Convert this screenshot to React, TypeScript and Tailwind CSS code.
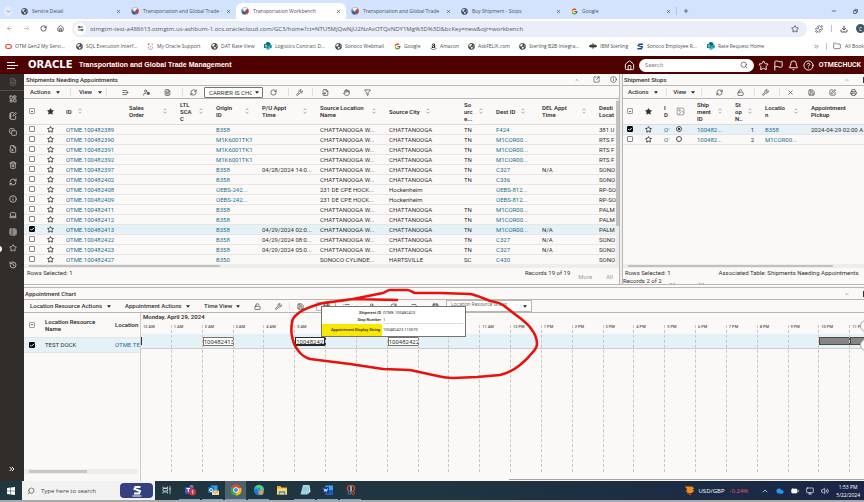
import { useState } from "react";
import type { ReactNode } from "react";
import {
  ArrowLeft,
  ArrowRight,
  Battery,
  BellIcon,
  Calendar,
  ChevronDown,
  ChevronsRight,
  ChevronUp,
  CircleHelp,
  Cloud,
  Copy,
  Download,
  FileInput,
  FileText,
  Filter,
  Flag,
  Folder,
  Hand,
  History,
  House,
  Image,
  Info,
  Laptop,
  LayoutDashboard,
  List,
  ListPlus,
  LockOpen,
  Minus,
  Monitor,
  NotebookPen,
  Plus,
  Printer,
  Puzzle,
  RefreshCw,
  RotateCw,
  Save,
  Search,
  Settings2,
  SquareArrowOutUpRight,
  SquarePen,
  Star,
  TableProperties,
  Trash2,
  UserCog,
  Volume2,
  Wrench,
  X,
} from "lucide-react";
import { FaAmazon, FaGlobeAmericas } from "react-icons/fa";
import { FcGoogle } from "react-icons/fc";

const Globe = () => <FaGlobeAmericas className="size-[7px] shrink-0 text-[#4a4d52]" />;

const OtmLogo = () => (
  <svg viewBox="0 0 16 16" className="size-2 shrink-0">
    <circle cx="8" cy="8" r="7.500" fill="#7d8894" />
    <path d="M2 4c3-4 8-4 11-1L8 8z" fill="#f1f3f5" />
    <path d="M8 7l6-3c2 4 1 8-2 10z" fill="#d8302f" />
    <path d="M2 9l6-2 2 6-4 2C4 14 2 12 2 9z" fill="#2b62ad" />
    <circle cx="7" cy="7" r="2" fill="#fff" />
  </svg>
);

const Sharepoint = () => (
  <svg viewBox="0 0 16 16" className="size-2 shrink-0">
    <circle cx="8" cy="5" r="5" fill="#036c70" />
    <circle cx="12" cy="9" r="4" fill="#1a9ba1" />
    <circle cx="8" cy="12.500" r="3.500" fill="#37c6d0" />
    <rect x="0" y="4" width="8" height="8" rx="1" fill="#03787c" />
    <path d="M6 6H3v2h3v2H2" stroke="#fff" fill="none" />
  </svg>
);

const SonocoLogo = () => (
  <svg viewBox="0 0 16 16" className="size-[7px] shrink-0">
    <path d="M14 3H5L3 6l9 3-2 4H1" stroke="#1d4f91" strokeWidth="3.500" fill="none" />
  </svg>
);

const SupportLogo = () => (
  <svg viewBox="0 0 16 16" className="size-[7px] shrink-0" fill="none" strokeWidth="2">
    <path d="M3 6V2h4" stroke="#c65bb5" />
    <path d="M10 2h3v4" stroke="#e3b23c" />
    <path d="M3 9c0 4 2 5 5 6 3-1 5-2 5-6" stroke="#a58be0" />
    <circle cx="8" cy="8" r="1.500" fill="#8bc34a" />
  </svg>
);

const IbmLogo = () => (
  <svg viewBox="0 0 16 16" className="size-2 shrink-0">
    <path d="M0 8h16M4 5v6M8 3v10M12 5v6" stroke="#222" strokeWidth="2.500" />
  </svg>
);

const OracleRing = () => (
  <svg viewBox="0 0 16 16" className="size-[7px] shrink-0">
    <rect x="1.500" y="3.500" width="13" height="9" rx="4.500" stroke="#e0443a" strokeWidth="2.500" fill="none" />
  </svg>
);

const tabs = [
  { title: "Service Detail", icon: <Globe /> },
  { title: "Transportation and Global Trade", icon: <OtmLogo /> },
  { title: "Transportation Workbench", icon: <OtmLogo />, active: true },
  { title: "Transportation and Global Trade", icon: <OtmLogo /> },
  { title: "Buy Shipment - Stops", icon: <Globe /> },
  { title: "Google", icon: <FcGoogle className="size-[7px] shrink-0" /> },
];

const bookmarks = [
  { title: "OTM Gen2 My Servi...", icon: <OracleRing />, width: "w-[71px]" },
  { title: "SQL Execution Interf...", icon: <Globe />, width: "w-[71px]" },
  { title: "My Oracle Support", icon: <SupportLogo />, width: "w-16" },
  { title: "DAT Rate View", icon: <Globe />, width: "w-[53px]" },
  { title: "Logistics Contract D...", icon: <Sharepoint />, width: "w-[71px]" },
  { title: "Sonoco Webmail", icon: <Globe />, width: "w-[59px]" },
  { title: "Google", icon: <FcGoogle className="size-[7px] shrink-0" />, width: "w-9" },
  { title: "Amazon", icon: <FaAmazon className="size-[7px] shrink-0 text-[#222]" />, width: "w-[38px]" },
  { title: "AskFELIX.com", icon: <Globe />, width: "w-[51px]" },
  { title: "Sterling B2B Integra...", icon: <Globe />, width: "w-[70px]" },
  { title: "IBM Sterling", icon: <IbmLogo />, width: "w-12" },
  { title: "Sonoco Employee R...", icon: <SonocoLogo />, width: "w-[70px]" },
  { title: "Rate Request Home", icon: <Sharepoint />, width: "w-16" },
];

const CHAT = "CHATTANOOGA W...";
const shipments = [
  ["OTME.100482389", "B358", "", CHAT, "CHATTANOOGA", "TN", "F424", "", "381 U"],
  ["OTME.100482390", "M1K6001TK1", "", CHAT, "CHATTANOOGA", "TN", "M1COR00...", "", "RTS F"],
  ["OTME.100482391", "M1K6001TK1", "", CHAT, "CHATTANOOGA", "TN", "M1COR00...", "", "RTS F"],
  ["OTME.100482392", "M1K6001TK1", "", CHAT, "CHATTANOOGA", "TN", "M1COR00...", "", "RTS F"],
  ["OTME.100482397", "B358", "04/28/2024 14:0...", CHAT, "CHATTANOOGA", "TN", "C327", "N/A", "SONO"],
  ["OTME.100482402", "B358", "", CHAT, "CHATTANOOGA", "TN", "C336", "", "SONO"],
  ["OTME.100482408", "OEBS-242...", "", "231 DE CPE HOCK...", "Hockenheim", "", "OEBS-812...", "", "RP-SO"],
  ["OTME.100482409", "OEBS-242...", "", "231 DE CPE HOCK...", "Hockenheim", "", "OEBS-812...", "", "RP-SO"],
  ["OTME.100482411", "B358", "", CHAT, "CHATTANOOGA", "TN", "M1COR00...", "", "PALM"],
  ["OTME.100482412", "B358", "", CHAT, "CHATTANOOGA", "TN", "M1COR00...", "", "PALM"],
  ["OTME.100482413", "B358", "04/29/2024 02:0...", CHAT, "CHATTANOOGA", "TN", "M1COR00...", "N/A", "PALM"],
  ["OTME.100482422", "B358", "04/29/2024 08:0...", CHAT, "CHATTANOOGA", "TN", "C327", "N/A", "SONO"],
  ["OTME.100482423", "B358", "04/29/2024 05:0...", CHAT, "CHATTANOOGA", "TN", "C327", "N/A", "SONO"],
  ["OTME.100482427", "B350", "", "SONOCO CYLINDE...", "HARTSVILLE", "SC", "C430", "", "SONO"],
];

const stops = [
  { ship: "100482...", stop: "1", location: "B358", pickup: "2024-04-29 02:00 A..." },
  { ship: "100482...", stop: "2", location: "M1COR00...", pickup: "" },
];

const hours = [
  "12 AM", "1 AM", "2 AM", "3 AM", "4 AM", "5 AM", "6 AM", "7 AM",
  "8 AM", "9 AM", "10 AM", "11 AM", "12 PM", "1 PM", "2 PM", "3 PM",
  "4 PM", "5 PM", "6 PM", "7 PM", "8 PM", "9 PM", "10 PM", "11 PM",
];

const Check = ({ label, checked, onChange }: { label: string; checked: boolean; onChange?: () => void }) => (
  <span className="relative block size-1.5">
    <input
      type="checkbox"
      aria-label={label}
      checked={checked}
      onChange={onChange}
      className="block size-1.5 appearance-none rounded-[1px] border border-[#8a8683] bg-white checked:border-black checked:bg-black"
    />
    {checked && (
      <svg viewBox="0 0 12 12" className="pointer-events-none absolute inset-0 size-1.5">
        <path d="M2.500 6l2.500 2.500 5-5" stroke="#fff" strokeWidth="2" fill="none" />
      </svg>
    )}
  </span>
);

const MinusBox = () => (
  <button aria-label="Clear selection" className="flex size-1.5 items-center justify-center rounded-[1px] border border-[#a09c99]">
    <span className="h-px w-0.5 bg-[#77736f]" />
  </button>
);

const Sort = () => (
  <svg viewBox="0 0 8 12" className="h-1.5 w-1 shrink-0" fill="none" stroke="#77736f" strokeWidth="1.200">
    <path d="M1 4.500L4 1.500l3 3M1 7.500l3 3 3-3" />
  </svg>
);

const Caret = () => (
  <svg viewBox="0 0 10 6" className="h-[3px] w-1 shrink-0">
    <path d="M0 0h10L5 6z" fill="#222" />
  </svg>
);

const MenuButton = ({ children, className }: { children: ReactNode; className: string }) => (
  <button className={`flex shrink-0 items-center justify-between whitespace-nowrap font-medium ${className}`}>
    {children}
    <Caret />
  </button>
);

const ToolIcon = ({ icon: Icon, label }: { icon: typeof Star; label: string }) => (
  <button aria-label={label} className="flex w-[21px] shrink-0 justify-center text-[#4b4744]">
    <Icon className="size-[7px]" strokeWidth={2.5} />
  </button>
);

const Divider = () => <span className="h-2 w-px shrink-0 bg-[#e3e0de]" />;

const Head = ({ label, fill = true }: { label: string; fill?: boolean }) => (
  <th className="h-[25px] p-0 text-left align-middle font-semibold">
    <span className="flex items-center gap-1.5 pr-[13px]">
      <span className={`whitespace-pre ${fill ? "w-0 flex-1" : ""}`}>{label}</span>
      <Sort />
    </span>
  </th>
);

const RowStar = () => (
  <button aria-label="Favorite" className="block">
    <Star className="size-[7px] text-[#33302d]" strokeWidth={3} />
  </button>
);

const BrowserChrome = () => (
  <div className="font-['Open_Sans','Noto_Sans',sans-serif] text-[#4b4e52]">
    <div className="flex h-[19px] items-stretch bg-[#d3e3fd] pt-[3px] text-[5px]">
      <button aria-label="Search tabs" className="mx-1 my-[3px] flex w-2 items-center justify-center rounded-sm bg-[#e3ecfc]">
        <ChevronDown className="size-[5px]" strokeWidth={3} />
      </button>
      {tabs.map((tab, i) => (
        <div
          key={i}
          className={`flex w-[110px] min-w-0 items-center gap-1 px-[5px] ${tab.active ? "rounded-t-md bg-white" : ""}`}
        >
          {tab.icon}
          <span className="flex-1 overflow-hidden whitespace-nowrap">{tab.title}</span>
          <button aria-label="Close tab">
            <X className="size-[5px]" strokeWidth={3} />
          </button>
        </div>
      ))}
      <span className="my-1 w-px bg-[#a8c4f5]" />
      <button aria-label="New tab" className="ml-1.5">
        <Plus className="size-1.5" strokeWidth={3} />
      </button>
      <div className="ml-auto flex items-center gap-4 pr-1.5">
        <Minus className="size-1.5" strokeWidth={3} />
        <Copy className="size-[5px] -scale-x-100" strokeWidth={4} />
      </div>
    </div>
    <div className="flex h-[19px] items-center bg-white pl-1.5">
      <div className="flex w-[66px] items-center gap-[10px]">
        <ArrowLeft className="size-[7px] text-[#8b8d90]" />
        <ArrowRight className="size-[7px] text-[#a9abad]" />
        <RotateCw className="size-[7px]" strokeWidth={3} />
        <House className="size-[7px]" strokeWidth={3} />
      </div>
      <div className="flex h-4 min-w-0 flex-1 items-center gap-1 rounded-full bg-[#e9eef8] px-0.5">
        <span className="flex size-3 shrink-0 items-center justify-center rounded-full bg-white">
          <Settings2 className="size-[7px]" strokeWidth={3} />
        </span>
        <input
          aria-label="Address"
          className="h-3 min-w-0 flex-1 bg-transparent text-[6px] text-[#55585c] outline-none"
          defaultValue="otmgtm-test-a488613.otmgtm.us-ashburn-1.ocs.oraclecloud.com/GC3/home?ct=NTU5MjQwNjU2NzAxOTQxNDY1Mg%3D%3D&bcKey=new&ojr=workbench"
        />
        <Star className="mr-1.5 size-2" strokeWidth={2.5} />
      </div>
      <div className="flex w-[57px] shrink-0 items-center gap-2 overflow-hidden pl-2">
        <Puzzle className="size-2 shrink-0" strokeWidth={2.5} />
        <span className="h-[7px] w-px shrink-0 bg-[#a8c4f5]" />
        <Download className="size-2 shrink-0" strokeWidth={3} />
        <span className="flex size-[9px] shrink-0 items-center justify-center rounded-full bg-[#3f5865] text-[5px] text-white">C</span>
      </div>
    </div>
    <div className="flex h-[18px] items-center overflow-hidden bg-white pb-0.5 pl-[5px] text-[5px]">
      {bookmarks.map((mark) => (
        <a key={mark.title} href="#" className={`flex shrink-0 items-center gap-[3px] whitespace-nowrap ${mark.width}`}>
          {mark.icon}
          {mark.title}
        </a>
      ))}
      <div className="ml-auto flex w-[51px] shrink-0 items-center whitespace-nowrap">
        <ChevronsRight className="size-[7px] shrink-0" />
        <span className="mx-1.5 h-[7px] w-px shrink-0 bg-[#a8c4f5]" />
        <Folder className="mr-1 size-2 shrink-0" />
        All Book
      </div>
    </div>
  </div>
);

const AppHeader = () => (
  <header className="flex h-[18px] items-center bg-[#4f0000] text-white">
    <button aria-label="Navigator" className="ml-[7px] flex w-[11px] flex-col gap-[2px]">
      <span className="h-px w-2 bg-white" />
      <span className="h-px w-[11px] bg-white" />
      <span className="h-px w-2 bg-white" />
    </button>
    <span className="ml-[10px] w-[51px] font-['DejaVu_Sans',sans-serif] text-[10px] leading-none font-bold">ORACLE</span>
    <h1 className="font-['Liberation_Sans',Arial,sans-serif] text-[7px] font-bold">Transportation and Global Trade Management</h1>
    <div className="ml-auto flex items-center gap-1 pr-[3px]">
      <House className="size-[11px]" />
      <label className="flex h-[13px] w-[115px] items-center rounded-full bg-white px-1.5 text-[#4b4744]">
        <input type="search" aria-label="Search" placeholder="Search" className="w-0 flex-1 bg-transparent text-[6px] outline-none placeholder:text-[#8a8683]" />
        <Search className="size-2" />
      </label>
      <Star className="size-[11px]" />
      <Flag className="size-[11px]" />
      <BellIcon className="size-[11px]" />
      <CircleHelp className="size-[11px]" />
      <button className="ml-px text-[7px] font-semibold">OTMECHUCK</button>
    </div>
  </header>
);

const sideIcons = [
  LayoutDashboard, NotebookPen, Copy, FileInput, Trash2, RefreshCw,
  Info, Laptop, TableProperties, Star, History,
];

const Sidebar = () => (
  <nav className="relative flex w-6 shrink-0 flex-col items-center bg-[#312d2a] text-[#c4bfbb]">
    <span className="flex h-[17px] w-full items-center justify-center border-b border-[#55504c] pl-0.5 text-[#77716c]">
      <FileText className="size-2" />
    </span>
    <div className="mt-1 flex h-[174px] flex-col justify-between pl-0.5">
      {sideIcons.map((Icon, i) => (
        <button key={i} aria-label={`Page ${i + 1}`}>
          <Icon className="size-2" strokeWidth={2.5} />
        </button>
      ))}
    </div>
    <ChevronsRight className="mt-auto mb-2 size-2 text-white" strokeWidth={3} />
    <span className="absolute top-[172px] -left-1 size-1.5 rounded-full bg-white" />
  </nav>
);

const ShipmentsPanel = () => {
  const [selected, setSelected] = useState<number[]>([10]);
  const toggle = (i: number) =>
    setSelected(selected.includes(i) ? selected.filter((s) => s !== i) : [...selected, i]);

  return (
    <section className="flex min-w-0 flex-1 flex-col">
      <div className="flex h-3 items-center border-b border-[#b9b6b4] pl-0.5">
        <h2 className="font-medium">Shipments Needing Appointments</h2>
        <div className="ml-auto flex items-center gap-[10px] pr-0.5">
          <ChevronUp className="mr-1 size-1 text-[#77736f]" strokeWidth={4} />
          <SquareArrowOutUpRight className="size-[7px]" />
          <Info className="size-[7px]" />
        </div>
      </div>
      <div className="flex h-[13px] items-center border-b border-[#b9b6b4] pl-1.5">
        <MenuButton className="w-[30px]">Actions</MenuButton>
        <span className="w-[10px]" />
        <Divider />
        <span className="w-2" />
        <MenuButton className="w-[23px]">View</MenuButton>
        <span className="w-1" />
        <Divider />
        <span className="w-2" />
        <ToolIcon icon={ListPlus} label="Add rows" />
        <ToolIcon icon={UserCog} label="Assign" />
        <ToolIcon icon={FileText} label="Document" />
        <span className="w-1" />
        <Divider />
        <ToolIcon icon={RefreshCw} label="Refresh" />
        <div className="relative h-[11px] w-[59px] shrink-0">
          <select
            aria-label="Saved query"
            className="block h-[11px] w-full appearance-none overflow-hidden rounded-[1px] border border-[#77736f] bg-white pr-2.5 pl-1 text-[6px] leading-[9px]"
          >
            <option>CARRIER IS CHOSEN</option>
          </select>
          <span className="pointer-events-none absolute inset-y-0 right-1 flex items-center">
            <Caret />
          </span>
        </div>
        <ToolIcon icon={RotateCw} label="Run query" />
        <span className="w-1" />
        <Divider />
        <ToolIcon icon={Wrench} label="Settings" />
        <span className="w-0.5" />
        <Divider />
        <span className="w-0.5" />
        <ToolIcon icon={FileInput} label="Export" />
        <ToolIcon icon={Hand} label="Grab" />
        <ToolIcon icon={Filter} label="Filter" />
      </div>
      <div className="flex h-[165px]">
        <div className="min-w-0 flex-1 overflow-hidden">
          <table className="w-[620px] table-fixed border-collapse">
            <colgroup>
              <col className="w-[18px]" />
              <col className="w-6" />
              <col className="w-[63px]" />
              <col className="w-[51px]" />
              <col className="w-9" />
              <col className="w-[46px]" />
              <col className="w-[58px]" />
              <col className="w-[69px]" />
              <col className="w-[75px]" />
              <col className="w-8" />
              <col className="w-[46px]" />
              <col className="w-[57px]" />
              <col />
            </colgroup>
            <thead className="leading-[7px]">
              <tr className="border-b border-[#dedbd9]">
                <th className="p-0 pl-[5px]"><MinusBox /></th>
                <th className="p-0 pl-[5px]"><Star className="size-[7px]" fill="currentColor" /></th>
                <Head label="ID" fill={false} />
                <Head label={"Sales\nOrder"} />
                <Head label={"LTL\nSCA\nC"} />
                <Head label={"Origin\nID"} />
                <Head label={"P/U Appt\nTime"} />
                <Head label={"Source Location\nName"} />
                <Head label="Source City" fill={false} />
                <Head label={"So\nurc\ne..."} />
                <Head label="Dest ID" fill={false} />
                <Head label={"DEL Appt\nTime"} />
                <th className="p-0 text-left align-middle font-semibold whitespace-pre">{"Desti\nLocat"}</th>
              </tr>
            </thead>
            <tbody>
              {shipments.map((row, i) => (
                <tr
                  key={row[0]}
                  className={`h-[10px] border-b border-[#e8e5e3] leading-[9px] whitespace-nowrap *:p-0 ${
                    selected.includes(i) ? "bg-[#e4f1f7]" : ""
                  }`}
                >
                  <td><span className="block pl-[5px]"><Check label={row[0]} checked={selected.includes(i)} onChange={() => toggle(i)} /></span></td>
                  <td><span className="block pl-[5px]"><RowStar /></span></td>
                  <td><a href="#" className="text-[#227090]">{row[0]}</a></td>
                  <td />
                  <td />
                  <td><a href="#" className="text-[#227090]">{row[1]}</a></td>
                  <td>{row[2]}</td>
                  <td>{row[3]}</td>
                  <td>{row[4]}</td>
                  <td>{row[5]}</td>
                  <td><a href="#" className="text-[#227090]">{row[6]}</a></td>
                  <td>{row[7]}</td>
                  <td>{row[8]}</td>
                </tr>
              ))}
            </tbody>
          </table>
        </div>
        <div className="w-[3px] bg-[#efedec] pt-0.5">
          <div className="h-[125px] bg-[#c3c1bf]" />
        </div>
      </div>
      <div className="h-1 bg-[#efedec] py-px pl-[5px]">
        <div className="h-0.5 w-[191px] bg-[#c3c1bf]" />
      </div>
      <div className="flex items-start pt-px pl-[3px]">
        <span>Rows Selected: 1</span>
        <span className="ml-auto">Records 19 of 19</span>
        <div className="ml-2 flex gap-3.5 pt-1 pr-1.5 text-[#a09c99]">
          <button>More</button>
          <button>All</button>
        </div>
      </div>
    </section>
  );
};

const StopsPanel = () => {
  const [current, setCurrent] = useState("1");

  return (
    <section className="flex w-[242px] shrink-0 flex-col overflow-hidden border-l border-[#b9b6b4]">
      <div className="flex h-3 shrink-0 items-center border-b border-[#b9b6b4] pl-px">
        <h2 className="font-medium">Shipment Stops</h2>
        <div className="ml-auto flex items-center gap-3.5">
          <ChevronUp className="size-1 text-[#77736f]" strokeWidth={4} />
          <span className="h-1.5 w-px bg-[#33302d]" />
        </div>
      </div>
      <div className="flex h-[13px] shrink-0 items-center border-b border-[#b9b6b4] pl-[5px]">
        <MenuButton className="w-[30px]">Actions</MenuButton>
        <span className="w-[10px]" />
        <Divider />
        <span className="w-[9px]" />
        <MenuButton className="w-[22px]">View</MenuButton>
        <span className="w-2" />
        <Divider />
        <span className="w-[9px]" />
        <ToolIcon icon={RefreshCw} label="Refresh" />
        <ToolIcon icon={LockOpen} label="Unlock" />
        <span className="w-1" />
        <Divider />
        <ToolIcon icon={Wrench} label="Settings" />
        <span className="w-1" />
        <Divider />
        <ToolIcon icon={X} label="Cancel" />
        <ToolIcon icon={Save} label="Save" />
        <ToolIcon icon={SquarePen} label="Edit" />
        <ToolIcon icon={Printer} label="Print" />
      </div>
      <div className="h-[165px] shrink-0 overflow-hidden">
        <table className="w-[262px] table-fixed border-collapse">
          <colgroup>
            <col className="w-[17px]" />
            <col className="w-6" />
            <col className="w-3" />
            <col className="w-[21px]" />
            <col className="w-[38px]" />
            <col className="w-[30px]" />
            <col className="w-[46px]" />
            <col />
          </colgroup>
          <thead className="leading-[7px]">
            <tr className="border-b border-[#dedbd9]">
              <th className="p-0 pl-1"><MinusBox /></th>
              <th className="p-0 pl-[5px]"><Star className="size-[7px]" fill="currentColor" /></th>
              <th className="p-0 text-left font-semibold whitespace-pre">{"I\nD"}</th>
              <th className="p-0"><Image className="size-[9px] text-[#8a8683]" /></th>
              <Head label={"Ship\nment\nID"} />
              <Head label={"St\nop\nN.."} />
              <Head label={"Locatio\nn"} />
              <th className="p-0 text-left font-semibold whitespace-pre">{"Appointment\nPickup"}</th>
            </tr>
          </thead>
          <tbody>
            {stops.map((s) => (
              <tr
                key={s.stop}
                className={`h-[10px] border-b border-[#e8e5e3] leading-[9px] whitespace-nowrap *:p-0 ${
                  s.stop === current ? "bg-[#e4f1f7]" : ""
                }`}
              >
                <td><span className="block pl-1"><Check label={`Stop ${s.stop}`} checked={s.stop === current} onChange={() => setCurrent(s.stop)} /></span></td>
                <td><span className="block pl-[5px]"><RowStar /></span></td>
                <td><a href="#" className="text-[#227090]">O'</a></td>
                <td>
                  <input
                    type="radio"
                    name="stop"
                    aria-label={`Select stop ${s.stop}`}
                    checked={s.stop === current}
                    onChange={() => setCurrent(s.stop)}
                    className="block size-1.5 appearance-none rounded-full border border-[#55514e] bg-white bg-clip-content p-px checked:bg-black"
                  />
                </td>
                <td><a href="#" className="text-[#227090]">{s.ship}</a></td>
                <td><span className="block pr-[11px] text-right">{s.stop}</span></td>
                <td><a href="#" className="text-[#227090]">{s.location}</a></td>
                <td>{s.pickup}</td>
              </tr>
            ))}
          </tbody>
        </table>
      </div>
      <div className="h-1 shrink-0 bg-[#efedec] py-px pl-[5px]">
        <div className="h-0.5 w-[205px] bg-[#c3c1bf]" />
      </div>
      <div className="flex shrink-0 gap-12 pt-px pl-0.5">
        <span>Rows Selected: 1</span>
        <span>Associated Table: Shipments Needing Appointments</span>
      </div>
      <div className="flex h-[7px] gap-2 overflow-hidden leading-[7px]">
        <span>Records 2 of 2</span>
        <span className="flex gap-3.5 pt-1 text-[#77736f]">
          <button>More</button>
          <button>All</button>
        </span>
      </div>
    </section>
  );
};

const Appointment = ({ label, className }: { label: string; className: string }) => (
  <button className={`h-[9px] overflow-hidden bg-white text-left leading-[7px] whitespace-nowrap ${className}`}>{label}</button>
);

const Tooltip = () => (
  <div role="tooltip" className="absolute top-[18px] left-[297px] w-[145px] border border-[#77736f] bg-white text-[4px] leading-[7px]">
    <dl className="grid grid-cols-[59px_1fr] gap-x-0.5 pt-0.5">
      <dt className="text-right font-semibold">Shipment ID</dt>
      <dd>OTME.100482423</dd>
      <dt className="text-right font-semibold">Stop Number</dt>
      <dd>1</dd>
    </dl>
    <dl className="grid grid-cols-[60px_1fr] items-center gap-x-px leading-3">
      <dt className="bg-[#fbe800] pr-0.5 text-right font-semibold">Appointment Display String</dt>
      <dd className="mr-0.5 self-stretch border-t border-[#dedbd9]">100482423:115070</dd>
    </dl>
  </div>
);

const ChartPanel = () => (
  <section className="relative flex flex-1 flex-col border-t border-[#b9b6b4]">
    <div className="flex h-3 items-center border-b border-[#b9b6b4] pl-px">
      <h2 className="font-medium">Appointment Chart</h2>
      <div className="ml-auto flex items-center gap-3.5">
        <ChevronUp className="size-1 text-[#77736f]" strokeWidth={4} />
        <span className="h-1.5 w-px bg-[#33302d]" />
      </div>
    </div>
    <div className="flex h-[13px] items-center border-b border-[#b9b6b4] pl-1.5">
      <MenuButton className="w-[81px]">Location Resource Actions</MenuButton>
      <span className="w-[14px]" />
      <MenuButton className="w-[65px]">Appointment Actions</MenuButton>
      <span className="w-[14px]" />
      <MenuButton className="w-9">Time View</MenuButton>
      <span className="w-[7px]" />
      <ToolIcon icon={LockOpen} label="Unlock" />
      <ToolIcon icon={Wrench} label="Settings" />
      <Divider />
      <ToolIcon icon={Save} label="Save" />
      <span className="w-[5px]" />
      <span className="flex w-5 justify-center rounded-[1px] border border-[#b9b6b4]">
        <ToolIcon icon={TableProperties} label="Details" />
      </span>
      <ToolIcon icon={List} label="List" />
      <span className="w-[5px]" />
      <ToolIcon icon={UserCog} label="Assign" />
      <ToolIcon icon={RefreshCw} label="Refresh" />
      <ToolIcon icon={ListPlus} label="Add" />
      <ToolIcon icon={Calendar} label="Calendar" />
      <button className="flex h-3 w-[86px] shrink-0 items-center justify-between border border-[#b9b6b4] bg-white px-1">
        <span className="self-start text-[5px] leading-[7px] text-[#77736f]">Location Resource Group</span>
        <Caret />
      </button>
    </div>
    <div className="flex flex-1">
      <div className="flex w-[116px] shrink-0 flex-col overflow-hidden">
        <table className="w-[130px] table-fixed border-collapse">
          <colgroup>
            <col className="w-[21px]" />
            <col className="w-[70px]" />
            <col />
          </colgroup>
          <thead className="leading-[7px]">
            <tr className="h-6">
              <th className="p-0 pl-[5px]"><MinusBox /></th>
              <th className="p-0 text-left font-semibold whitespace-pre">{"Location Resource\nName"}</th>
              <th className="p-0 text-left font-semibold">Location</th>
            </tr>
          </thead>
          <tbody>
            <tr className="h-[15px] border-y border-[#e8e5e3] bg-[#e4f1f7] whitespace-nowrap *:p-0">
              <td><span className="block pl-[5px]"><Check label="TEST DOCK" checked onChange={() => {}} /></span></td>
              <td>TEST DOCK</td>
              <td><a href="#" className="text-[#227090]">OTME.TE</a></td>
            </tr>
          </tbody>
        </table>
        <div className="mt-auto mr-0.5 mb-[7px] h-[5px] bg-[#efedec] py-px pl-[5px]">
          <div className="h-[3px] w-[58px] bg-[#c9c7c5]" />
        </div>
      </div>
      <div className="flex min-w-0 flex-1 flex-col overflow-hidden border-l border-[#cfccca]">
        <div className="h-2 pl-0.5 font-semibold">Monday, April 29, 2024</div>
        <div className="relative flex flex-1 flex-col">
          <div className="grid h-[13px] w-[740px] grid-cols-24 items-center text-[4px] font-medium text-[#55514e]">
            {hours.map((hour) => (
              <span key={hour} className="pb-0.5 pl-0.5 whitespace-nowrap">{hour}</span>
            ))}
          </div>
          <div className="grid h-[15px] w-[740px] grid-cols-24 items-center border-b border-[#cfccca] bg-[#e4f1f7]">
            <span className="col-start-1 h-2 w-px bg-[#33302d]" />
            <Appointment label="100482413:" className="col-start-3 border border-[#77736f]" />
            <Appointment label="100482423:" className="col-start-6 border-2 border-t border-l border-[#26292e]" />
            <Appointment label="100482422:" className="col-start-9 border border-[#77736f]" />
            <span className="col-start-23 h-2 border border-[#4a4a4a] bg-[#858585]" />
            <span className="col-start-24 h-2 border border-[#4a4a4a] bg-[#858585]" />
          </div>
          <div className="pointer-events-none absolute top-1 bottom-[9px] left-0 grid w-[740px] grid-cols-24">
            {hours.map((hour) => (
              <span key={hour} className="border-r border-dashed border-[#c9c7c5]" />
            ))}
          </div>
          <div className="mt-auto mb-px ml-[368px] h-px bg-[#a5a3a1]" />
        </div>
      </div>
    </div>
    <Tooltip />
    <button aria-label="Previous" className="absolute top-8 -right-2 size-3 rounded-full border border-[#a5a3a1] bg-white" />
    <button aria-label="Next" className="absolute top-[51px] -right-2 size-3 rounded-full border border-[#a5a3a1] bg-white" />
    {/* hand-drawn markup around the hovered appointment */}
    <svg viewBox="0 0 280 95" className="pointer-events-none absolute top-0 left-[266px] h-[95px] w-[280px]" fill="none" stroke="#e8120c" strokeWidth="2.600" strokeLinecap="round" strokeLinejoin="round">
      <path
        transform="translate(-24 0)"
        d="M131 12L87 11C73 13 66 14 57 15 46 18 40 20 34 24c-5 4-8 6-8 11-1 6-1 9 0 13 1 6 2 9 5 13 4 6 7 8 13 10l40 5 33 5 27 1 23 5c8 2 13 3 20 3l24-1 23-2c8-2 14-5 20-10 5-4 9-8 12-12 3-3 5-5 5-9 0-6-2-10-5-14-3-5-7-8-12-12L237 17c-5-3-8-3-13-4-8-3-13-6-20-7l-30-1h-25c-3-1-5-3-8-3h-17c-3 0-4 2-7 3l-30 6"
      />
    </svg>
  </section>
);

const TaskIcon = ({ children, className }: { children: ReactNode; className: string }) => (
  <button className={`mx-px flex h-full w-[21px] items-center justify-center border-b ${className}`}>
    <svg viewBox="0 0 24 24" className="size-3">{children}</svg>
  </button>
);

const Taskbar = () => (
  <footer className="flex h-[21px] shrink-0 items-stretch border-b-2 border-[#a9a9a9] bg-linear-to-r from-[#1f3640] via-[#1f3540] to-[#1a2547] font-['Open_Sans','Noto_Sans',sans-serif] text-white">
    <button aria-label="Start" className="flex w-[22px] items-center justify-center">
      <svg viewBox="0 0 16 16" className="size-2 fill-white">
        <path d="M0 2l7-1v6.500H0zM8 1l8-1v7.500H8zM0 8.500h7V15l-7-1zM8 8.500h8V16l-8-1z" />
      </svg>
    </button>
    <label className="flex w-[133px] items-center gap-1.5 bg-[#f2f2f2] pr-0.5 pl-[5px] text-[#444]">
      <Search className="size-2 -scale-x-100" />
      <input aria-label="Type here to search" placeholder="Type here to search" className="w-0 flex-1 bg-transparent text-[6px] outline-none placeholder:text-[#444]" />
      <span className="flex h-[15px] w-[33px] items-center justify-center rounded-sm bg-[#354080]">
        <svg viewBox="0 0 24 24" className="size-3" fill="none" stroke="#fff" strokeWidth="4">
          <path d="M19 4H9L7 8l11 4-2 5H6" />
          <path d="M3 22h18" strokeWidth="2" />
        </svg>
      </span>
    </label>
    <div className="flex">
      <TaskIcon className="border-transparent">
        <path d="M4 5v3h9V5M4 19v-3h9v3M4 9h9v5H4zM18 4v16M16 10h4" stroke="#dfe4e6" strokeWidth="1.500" fill="none" />
      </TaskIcon>
      <TaskIcon className="border-[#6fa8d6]">
        <circle cx="15" cy="6" r="4" fill="#7b83eb" />
        <rect x="2" y="6" width="16" height="14" rx="2" fill="#4b53bc" />
        <path d="M5 9h7M8.500 9v7" stroke="#fff" strokeWidth="2" />
        <circle cx="17" cy="16" r="7" fill="#d13438" />
        <path d="M15.500 14l2-1v7" stroke="#fff" strokeWidth="1.500" fill="none" />
      </TaskIcon>
      <TaskIcon className="border-[#6fa8d6]">
        <path d="M8 3h13v14H8z" fill="#28a8ea" />
        <rect x="2" y="6" width="12" height="12" rx="1" fill="#0f6cbd" />
        <circle cx="8" cy="12" r="3" stroke="#fff" strokeWidth="2" fill="none" />
        <path d="M10 13h14v9H10z" fill="#f7d7a8" />
        <path d="M10 13l7 5 7-5" stroke="#d57b1b" strokeWidth="1.500" fill="none" />
      </TaskIcon>
      <TaskIcon className="border-[#6fa8d6] bg-[#4f626b]">
        <circle cx="12" cy="12" r="11" fill="#34a853" />
        <path d="M2.500 6.500A11 11 0 0 1 21.500 6.500L12 12z" fill="#ea4335" />
        <path d="M21.500 6.500A11 11 0 0 1 12 23l1-11z" fill="#fbbc04" />
        <path d="M12 7h10" stroke="#ea4335" strokeWidth="2" />
        <circle cx="12" cy="12" r="5.500" fill="#fff" />
        <circle cx="12" cy="12" r="4" fill="#4285f4" />
      </TaskIcon>
      <TaskIcon className="border-[#6fa8d6]">
        <circle cx="12" cy="12" r="10.500" fill="#1b7fd1" />
        <path d="M3 7c5-8 18-6 19 4 0 5-7 5-7 2 0-5-7-7-12-6z" fill="#55cf71" />
        <circle cx="16" cy="17" r="5" fill="#d99a5e" />
        <path d="M3 10c4-3 9-1 8 5" stroke="#35c1f1" strokeWidth="2" fill="none" />
      </TaskIcon>
      <TaskIcon className="border-transparent">
        <path d="M2 4h7l2 3h11v14H2z" fill="#e9b13b" />
        <path d="M2 9h20v12H2z" fill="#ffd76b" />
        <path d="M7 21v-5h10v5" stroke="#3a92d6" strokeWidth="3" fill="none" />
      </TaskIcon>
      <TaskIcon className="border-[#6fa8d6]">
        <path d="M8 2h13l-4 19H3z" fill="#9fd6e3" />
        <path d="M17 21l4-19 2 13z" fill="#d6e3e7" />
        <path d="M9 8h8M8 12h8" stroke="#5fa7b8" />
      </TaskIcon>
      <TaskIcon className="border-[#6fa8d6]">
        <path d="M7 3h15v18H7z" fill="#41a5ee" />
        <path d="M7 12h15v9H7z" fill="#185abd" />
        <rect x="1" y="6" width="13" height="12" rx="1" fill="#103f91" />
        <path d="M4 9l2 6 1.500-5L9 15l2-6" stroke="#fff" strokeWidth="1.500" fill="none" />
      </TaskIcon>
      <TaskIcon className="border-[#6fa8d6]">
        <path d="M12 3v12" stroke="#e2e6e9" strokeWidth="2.500" />
        <path d="M10 3c-6 1-7 8-2 12M14 3c6 1 7 8 2 12" stroke="#d6482b" strokeWidth="3" fill="none" />
        <circle cx="9" cy="18" r="3" stroke="#2f7fd6" strokeWidth="2" fill="none" />
        <circle cx="16" cy="18" r="3" stroke="#d6482b" strokeWidth="2" fill="none" />
      </TaskIcon>
    </div>
    <div className="ml-auto flex items-center gap-[7px] pr-1 text-[6px]">
      <svg viewBox="0 0 24 24" className="-mr-1 size-[11px]">
        <path d="M2 3h16l4 4-3 3 3 3-6 5H6l2-4H3l4-4z" fill="#f08c12" />
        <path d="M9 19h8l-4 4z" fill="#e2382c" />
      </svg>
      <span>USD/GBP</span>
      <span className="-ml-0.5 mr-1.5 text-[#e0606a]">-0.24%</span>
      <ChevronUp className="size-2" />
      <Cloud className="size-2 text-[#2496ec]" fill="currentColor" />
      <Battery className="size-2" fill="currentColor" />
      <Monitor className="size-2" />
      <Volume2 className="size-2" />
      <span className="text-center text-[5px] leading-2">
        1:53 PM
        <br />
        5/22/2024
      </span>
    </div>
  </footer>
);

export default function App() {
  return (
    <div className="flex min-h-screen flex-col overflow-hidden bg-[#fbf9f8] font-['Roboto','Liberation_Sans',sans-serif] text-[6px] leading-[8px] text-[#33302d]">
      <BrowserChrome />
      <AppHeader />
      <div className="flex flex-1">
        <Sidebar />
        <main className="flex min-w-0 flex-1 flex-col gap-0.5">
          <div className="flex h-[211px] border-b border-[#b9b6b4]">
            <ShipmentsPanel />
            <div className="w-[3px] shrink-0 border-l border-[#b9b6b4] bg-[#f1efed]" />
            <StopsPanel />
          </div>
          <ChartPanel />
        </main>
      </div>
      <Taskbar />
    </div>
  );
}
